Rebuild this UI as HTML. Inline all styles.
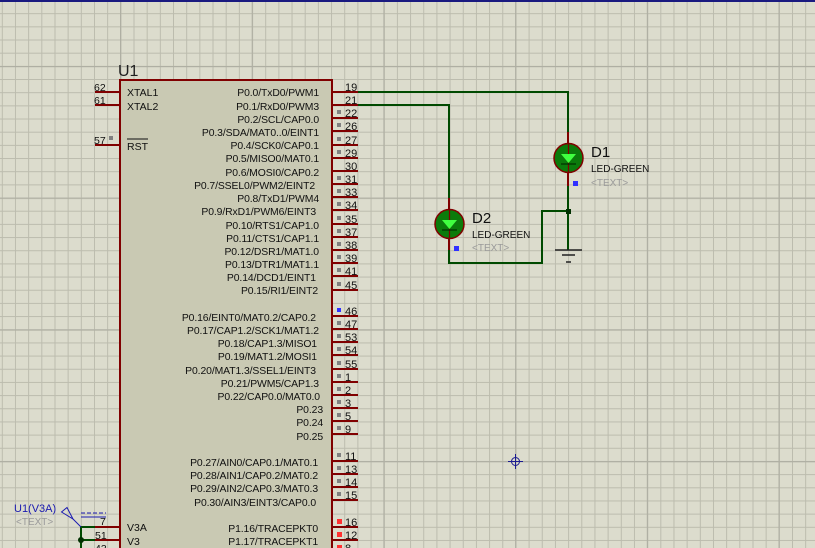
<!DOCTYPE html>
<html><head><meta charset="utf-8"><style>
html,body{margin:0;padding:0;background:#dcdccd;overflow:hidden}
svg{display:block}
text{font-family:"Liberation Sans",Arial,sans-serif}
</style></head><body>
<svg width="815" height="548" viewBox="0 0 815 548" xmlns="http://www.w3.org/2000/svg">
<defs>
<pattern id="g" x="1.8" y="0" width="13.17" height="13.17" patternUnits="userSpaceOnUse">
<rect x="0" y="0" width="1" height="13.17" fill="#bcbcae"/>
<rect x="0" y="0" width="13.17" height="1" fill="#bcbcae"/>
</pattern>
<pattern id="G" x="120" y="66" width="131.7" height="131.7" patternUnits="userSpaceOnUse">
<rect x="0" y="0" width="1.2" height="131.7" fill="#afafa3"/>
<rect x="0" y="0" width="131.7" height="1.2" fill="#afafa3"/>
</pattern>
</defs>
<rect width="815" height="548" fill="#dcdccd"/>
<rect width="815" height="548" fill="url(#g)"/>
<rect width="815" height="548" fill="url(#G)"/>
<rect width="815" height="2" fill="#1a1a80"/>

<rect x="120" y="80" width="212" height="480" fill="#c9c9b3" stroke="#800000" stroke-width="2"/>
<text x="118" y="76" font-size="16" fill="#202020">U1</text>

<g stroke="#800000" stroke-width="2">
<line x1="95" y1="92" x2="120" y2="92"/>
<line x1="95" y1="105" x2="120" y2="105"/>
<line x1="95" y1="145" x2="120" y2="145"/>
<line x1="95" y1="527" x2="120" y2="527"/>
<line x1="95" y1="540" x2="120" y2="540"/>
</g>
<g font-size="10.5" fill="#101010">
<text x="94" y="91">62</text><text x="94" y="104">61</text><text x="94" y="144">57</text>
<text x="127" y="96">XTAL1</text><text x="127" y="110">XTAL2</text>
<text x="127" y="150">RST</text>
<text x="127" y="531">V3A</text><text x="127" y="545">V3</text>
<text x="100" y="525">7</text><text x="95" y="539">51</text><text x="95" y="552">43</text>
</g>
<line x1="127" y1="139" x2="148" y2="139" stroke="#101010" stroke-width="1"/>
<rect x="109" y="136" width="4" height="4" fill="#808080"/>

<g stroke="#800000" stroke-width="2">
<line x1="332" y1="92" x2="358" y2="92"/><line x1="332" y1="105" x2="358" y2="105"/>
<line x1="332" y1="118" x2="358" y2="118"/><line x1="332" y1="131" x2="358" y2="131"/>
<line x1="332" y1="145" x2="358" y2="145"/><line x1="332" y1="158" x2="358" y2="158"/>
<line x1="332" y1="171" x2="358" y2="171"/><line x1="332" y1="184" x2="358" y2="184"/>
<line x1="332" y1="197" x2="358" y2="197"/><line x1="332" y1="210" x2="358" y2="210"/>
<line x1="332" y1="224" x2="358" y2="224"/><line x1="332" y1="237" x2="358" y2="237"/>
<line x1="332" y1="250" x2="358" y2="250"/><line x1="332" y1="263" x2="358" y2="263"/>
<line x1="332" y1="276" x2="358" y2="276"/><line x1="332" y1="290" x2="358" y2="290"/>
<line x1="332" y1="316" x2="358" y2="316"/><line x1="332" y1="329" x2="358" y2="329"/>
<line x1="332" y1="342" x2="358" y2="342"/><line x1="332" y1="355" x2="358" y2="355"/>
<line x1="332" y1="369" x2="358" y2="369"/><line x1="332" y1="382" x2="358" y2="382"/>
<line x1="332" y1="395" x2="358" y2="395"/><line x1="332" y1="408" x2="358" y2="408"/>
<line x1="332" y1="421" x2="358" y2="421"/><line x1="332" y1="434" x2="358" y2="434"/>
<line x1="332" y1="461" x2="358" y2="461"/><line x1="332" y1="474" x2="358" y2="474"/>
<line x1="332" y1="487" x2="358" y2="487"/><line x1="332" y1="500" x2="358" y2="500"/>
<line x1="332" y1="527" x2="358" y2="527"/><line x1="332" y1="540" x2="358" y2="540"/>
</g>
<g font-size="10.4" fill="#101010" text-anchor="end" letter-spacing="-0.1">
<text x="319" y="96">P0.0/TxD0/PWM1</text>
<text x="319" y="110">P0.1/RxD0/PWM3</text>
<text x="319" y="123">P0.2/SCL/CAP0.0</text>
<text x="319" y="136">P0.3/SDA/MAT0..0/EINT1</text>
<text x="319" y="149">P0.4/SCK0/CAP0.1</text>
<text x="319" y="162">P0.5/MISO0/MAT0.1</text>
<text x="319" y="176">P0.6/MOSI0/CAP0.2</text>
<text x="315" y="189">P0.7/SSEL0/PWM2/EINT2</text>
<text x="319" y="202">P0.8/TxD1/PWM4</text>
<text x="316" y="215">P0.9/RxD1/PWM6/EINT3</text>
<text x="319" y="229">P0.10/RTS1/CAP1.0</text>
<text x="319" y="242">P0.11/CTS1/CAP1.1</text>
<text x="319" y="255">P0.12/DSR1/MAT1.0</text>
<text x="319" y="268">P0.13/DTR1/MAT1.1</text>
<text x="316" y="281">P0.14/DCD1/EINT1</text>
<text x="318" y="294">P0.15/RI1/EINT2</text>
<text x="316" y="321">P0.16/EINT0/MAT0.2/CAP0.2</text>
<text x="319" y="334">P0.17/CAP1.2/SCK1/MAT1.2</text>
<text x="317" y="347">P0.18/CAP1.3/MISO1</text>
<text x="317" y="360">P0.19/MAT1.2/MOSI1</text>
<text x="316" y="374">P0.20/MAT1.3/SSEL1/EINT3</text>
<text x="319" y="387">P0.21/PWM5/CAP1.3</text>
<text x="320" y="400">P0.22/CAP0.0/MAT0.0</text>
<text x="323" y="413">P0.23</text>
<text x="323" y="426">P0.24</text>
<text x="323" y="440">P0.25</text>
<text x="318" y="466">P0.27/AIN0/CAP0.1/MAT0.1</text>
<text x="318" y="479">P0.28/AIN1/CAP0.2/MAT0.2</text>
<text x="318" y="492">P0.29/AIN2/CAP0.3/MAT0.3</text>
<text x="316" y="506">P0.30/AIN3/EINT3/CAP0.0</text>
<text x="318" y="532">P1.16/TRACEPKT0</text>
<text x="318" y="545">P1.17/TRACEPKT1</text>
</g>
<g font-size="11" fill="#101010">
<text x="345" y="91">19</text><text x="345" y="104">21</text><text x="345" y="117">22</text>
<text x="345" y="130">26</text><text x="345" y="144">27</text><text x="345" y="157">29</text>
<text x="345" y="170">30</text><text x="345" y="183">31</text><text x="345" y="196">33</text>
<text x="345" y="209">34</text><text x="345" y="223">35</text><text x="345" y="236">37</text>
<text x="345" y="249">38</text><text x="345" y="262">39</text><text x="345" y="275">41</text>
<text x="345" y="289">45</text><text x="345" y="315">46</text><text x="345" y="328">47</text>
<text x="345" y="341">53</text><text x="345" y="354">54</text><text x="345" y="368">55</text>
<text x="345" y="381">1</text><text x="345" y="394">2</text><text x="345" y="407">3</text>
<text x="345" y="420">5</text><text x="345" y="433">9</text><text x="345" y="460">11</text>
<text x="345" y="473">13</text><text x="345" y="486">14</text><text x="345" y="499">15</text>
<text x="345" y="526">16</text><text x="345" y="539">12</text><text x="345" y="552">8</text>
</g>
<g fill="#808080">
<rect x="337" y="110" width="4" height="4"/><rect x="337" y="123" width="4" height="4"/>
<rect x="337" y="137" width="4" height="4"/><rect x="337" y="150" width="4" height="4"/>
<rect x="337" y="176" width="4" height="4"/><rect x="337" y="189" width="4" height="4"/>
<rect x="337" y="202" width="4" height="4"/><rect x="337" y="216" width="4" height="4"/>
<rect x="337" y="229" width="4" height="4"/><rect x="337" y="242" width="4" height="4"/>
<rect x="337" y="255" width="4" height="4"/><rect x="337" y="268" width="4" height="4"/>
<rect x="337" y="282" width="4" height="4"/><rect x="337" y="321" width="4" height="4"/>
<rect x="337" y="334" width="4" height="4"/><rect x="337" y="347" width="4" height="4"/>
<rect x="337" y="361" width="4" height="4"/><rect x="337" y="374" width="4" height="4"/>
<rect x="337" y="387" width="4" height="4"/><rect x="337" y="400" width="4" height="4"/>
<rect x="337" y="413" width="4" height="4"/><rect x="337" y="426" width="4" height="4"/>
<rect x="337" y="453" width="4" height="4"/><rect x="337" y="466" width="4" height="4"/>
<rect x="337" y="479" width="4" height="4"/><rect x="337" y="492" width="4" height="4"/>
</g>
<rect x="337" y="308" width="4" height="4" fill="#3030ff"/>
<g fill="#ff3030">
<rect x="337" y="519" width="5" height="5"/><rect x="337" y="532" width="5" height="5"/><rect x="337" y="545" width="5" height="5"/>
</g>

<g stroke="#004a00" stroke-width="2" fill="none">
<polyline points="358,92 568,92 568,132"/>
<polyline points="358,105 449,105 449,198"/>
<polyline points="568,186 568,250"/>
<polyline points="568,211 542,211 542,263 449,263 449,250"/>
<polyline points="81,560 81,527 95,527"/>
<line x1="81" y1="540" x2="95" y2="540"/>
</g>
<rect x="566" y="209" width="5" height="5" fill="#003000"/>
<circle cx="81" cy="540" r="3" fill="#003000"/>
<g stroke="#202020" stroke-width="1.5">
<line x1="555" y1="250" x2="582" y2="250"/>
<line x1="562" y1="255" x2="575" y2="255"/>
<line x1="566" y1="262" x2="571" y2="262"/>
</g>

<line x1="568" y1="132" x2="568" y2="186" stroke="#800000" stroke-width="2"/>
<circle cx="568.5" cy="158" r="14.5" fill="#0b7b0b" stroke="#800000" stroke-width="1.5"/>
<line x1="568.5" y1="144" x2="568.5" y2="172" stroke="#800000" stroke-width="1.2"/>
<polygon points="561,154 576,154 568.5,163" fill="#40ff40"/>
<line x1="561" y1="164" x2="576" y2="164" stroke="#003000" stroke-width="1.2"/>
<rect x="573" y="181" width="5" height="5" fill="#3030ff"/>
<text x="591" y="157" font-size="15" fill="#101010">D1</text>
<text x="591" y="172" font-size="10" fill="#101010">LED-GREEN</text>
<text x="591" y="186" font-size="10" fill="#9a9a9a">&lt;TEXT&gt;</text>

<line x1="449" y1="198" x2="449" y2="250" stroke="#800000" stroke-width="2"/>
<circle cx="449.5" cy="224" r="14.5" fill="#0b7b0b" stroke="#800000" stroke-width="1.5"/>
<line x1="449.5" y1="210" x2="449.5" y2="238" stroke="#800000" stroke-width="1.2"/>
<polygon points="442,220 457,220 449.5,229" fill="#40ff40"/>
<line x1="442" y1="230" x2="457" y2="230" stroke="#003000" stroke-width="1.2"/>
<rect x="454" y="246" width="5" height="5" fill="#3030ff"/>
<text x="472" y="223" font-size="15" fill="#101010">D2</text>
<text x="472" y="238" font-size="10" fill="#101010">LED-GREEN</text>
<text x="472" y="251" font-size="10" fill="#9a9a9a">&lt;TEXT&gt;</text>

<g stroke="#1a1a90" stroke-width="1" fill="none">
<circle cx="515.5" cy="461.5" r="4"/>
<line x1="508" y1="461.5" x2="523" y2="461.5"/>
<line x1="515.5" y1="454" x2="515.5" y2="469"/>
</g>

<text x="14" y="512" font-size="11" fill="#1a1ab0">U1(V3A)</text>
<text x="16" y="525" font-size="10" fill="#9a9a9a">&lt;TEXT&gt;</text>
<g stroke="#1a1ab0" stroke-width="1" fill="none">
<polygon points="61.5,512 67,507.5 73,519"/>
<line x1="73" y1="519" x2="81" y2="527"/>
<line x1="81" y1="513" x2="106" y2="513" stroke-dasharray="4,2"/>
<line x1="81" y1="517" x2="106" y2="517"/>
</g>
</svg>
</body></html>
